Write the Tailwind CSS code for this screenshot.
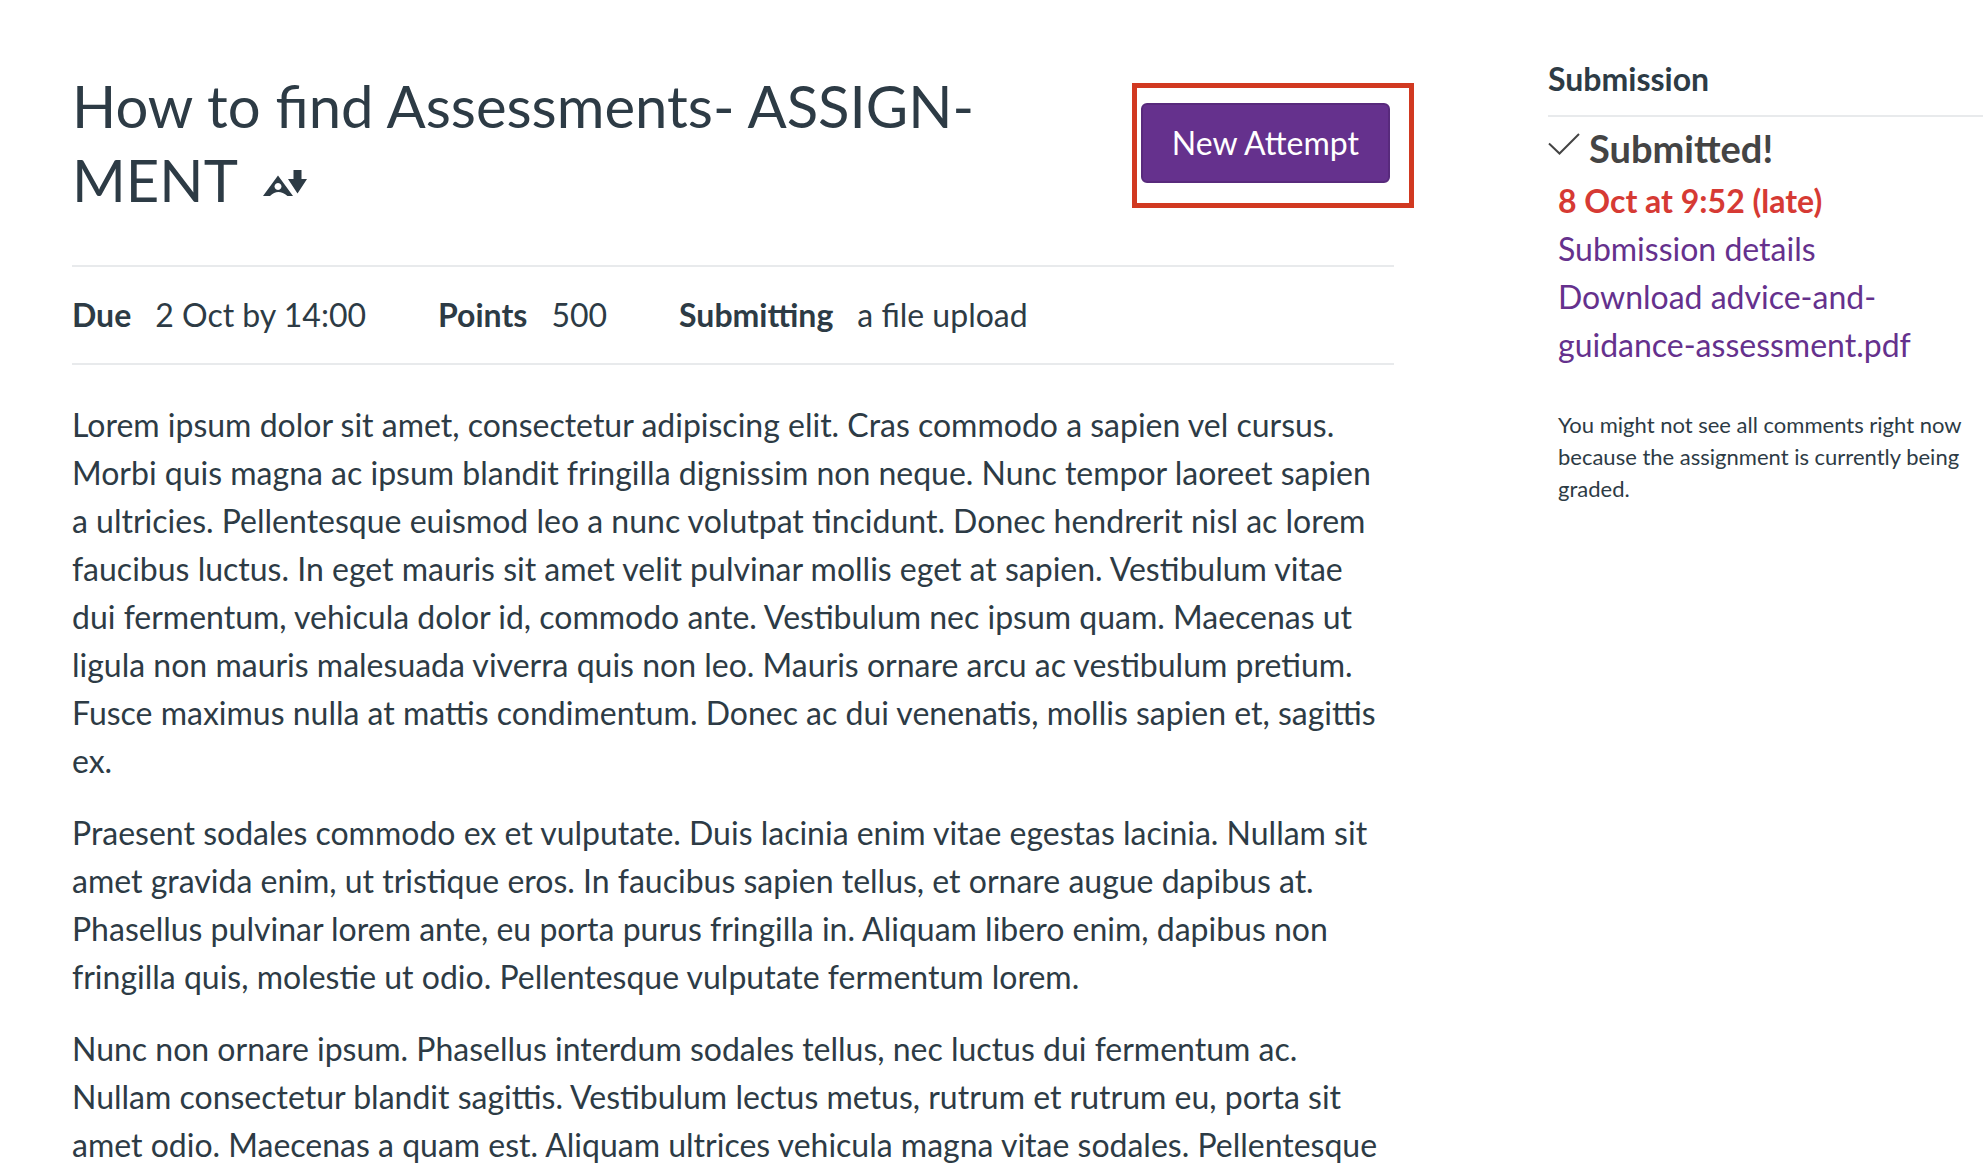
<!DOCTYPE html>
<html lang="en">
<head>
    <meta charset="UTF-8">
    <meta name="viewport" content="width=device-width, initial-scale=1.0">
    <title>How to find Assessments- ASSIGNMENT</title>
    <script src="https://cdn.jsdelivr.net/npm/@tailwindcss/browser@4"></script>
</head>
<body class="bg-white font-['Lato',sans-serif] text-[32px] leading-[48px] text-[#2d3b45] h-screen overflow-hidden">

    <div class="flex items-start gap-[154px] pl-[72px]">

        <!-- Assignment -->
        <main class="flex-1 min-w-0">
            <header class="flex items-start justify-between pt-[69px] pb-12">
                <h1 class="flex-1 max-w-[920px] text-[58px] leading-[74px]">
                    How to find Assessments- ASSIGN&shy;MENT
                    <!-- Accessibility score -->
                    <button type="button" aria-label="Accessibility score" class="inline-block ml-3">
                        <svg class="w-11 h-8 pb-[6px]" viewBox="0 0 44 26" fill="#2d3b45" aria-hidden="true">
                            <path fill-rule="evenodd" d="M15 5.500L30 26H24.500Q15 18 7 26H0ZM15 13a3.500 3.500 0 1 0 .01 0Z"/>
                            <path d="M30.500 0H38.500V9H44L34.500 23.500L25 9H30.500Z"/>
                        </svg>
                    </button>
                </h1>
                <div class="relative mt-[34px] mr-1">
                    <button type="button" class="block h-20 px-[29px] rounded-md border-2 border-[#582a7c] bg-[#65318d] text-white">New Attempt</button>
                    <!-- Highlight box -->
                    <div class="absolute -left-[9px] -right-6 -top-5 -bottom-[25px] border-5 border-[#d13921] pointer-events-none"></div>
                </div>
            </header>

            <ul class="flex flex-wrap gap-x-[72px] py-6 border-y-2 border-[#e8eaec]">
                <li class="flex gap-6"><span class="font-bold">Due</span><span>2 Oct by 14:00</span></li>
                <li class="flex gap-6"><span class="font-bold">Points</span><span>500</span></li>
                <li class="flex gap-6"><span class="font-bold">Submitting</span><span>a file upload</span></li>
            </ul>

            <div class="pt-9 space-y-6">
                <p>Lorem ipsum dolor sit amet, consectetur adipiscing elit. Cras commodo a sapien vel cursus. Morbi quis magna ac ipsum blandit fringilla dignissim non neque. Nunc tempor laoreet sapien a ultricies. Pellentesque euismod leo a nunc volutpat tincidunt. Donec hendrerit nisl ac lorem faucibus luctus. In eget mauris sit amet velit pulvinar mollis eget at sapien. Vestibulum vitae dui fermentum, vehicula dolor id, commodo ante. Vestibulum nec ipsum quam. Maecenas ut ligula non mauris malesuada viverra quis non leo. Mauris ornare arcu ac vestibulum pretium. Fusce maximus nulla at mattis condimentum. Donec ac dui venenatis, mollis sapien et, sagittis ex.</p>
                <p>Praesent sodales commodo ex et vulputate. Duis lacinia enim vitae egestas lacinia. Nullam sit amet gravida enim, ut tristique eros. In faucibus sapien tellus, et ornare augue dapibus at. Phasellus pulvinar lorem ante, eu porta purus fringilla in. Aliquam libero enim, dapibus non fringilla quis, molestie ut odio. Pellentesque vulputate fermentum lorem.</p>
                <p>Nunc non ornare ipsum. Phasellus interdum sodales tellus, nec luctus dui fermentum ac. Nullam consectetur blandit sagittis. Vestibulum lectus metus, rutrum et rutrum eu, porta sit amet odio. Maecenas a quam est. Aliquam ultrices vehicula magna vitae sodales. Pellentesque</p>
            </div>
        </main>

        <!-- Submission sidebar -->
        <aside class="w-[435px] shrink-0 pt-[55px]">
            <h2 class="font-bold pb-3 border-b-2 border-[#e8eaec]">Submission</h2>
            <div class="flex items-start gap-[9px] pt-[7px] pb-[5px] text-[38px] font-bold text-[#444444]">
                <svg class="w-8 h-10" viewBox="0 0 32 32" fill="none" stroke="#444444" stroke-width="2" aria-hidden="true">
                    <path d="M1 15.500L11.500 25.500L31 6"/>
                </svg>
                <h3>Submitted!</h3>
            </div>
            <div class="pl-[10px] pr-4">
                <p class="font-bold text-[#d63a34]">8 Oct at 9:52 (late)</p>
                <a href="#" class="block text-[#65318d]">Submission details</a>
                <a href="#" class="block text-[#65318d]">Download advice-and-guidance-assessment.pdf</a>
                <p class="pt-10 text-[22px] leading-8">You might not see all comments right now because the assignment is currently being graded.</p>
            </div>
        </aside>

    </div>

</body>
</html>
